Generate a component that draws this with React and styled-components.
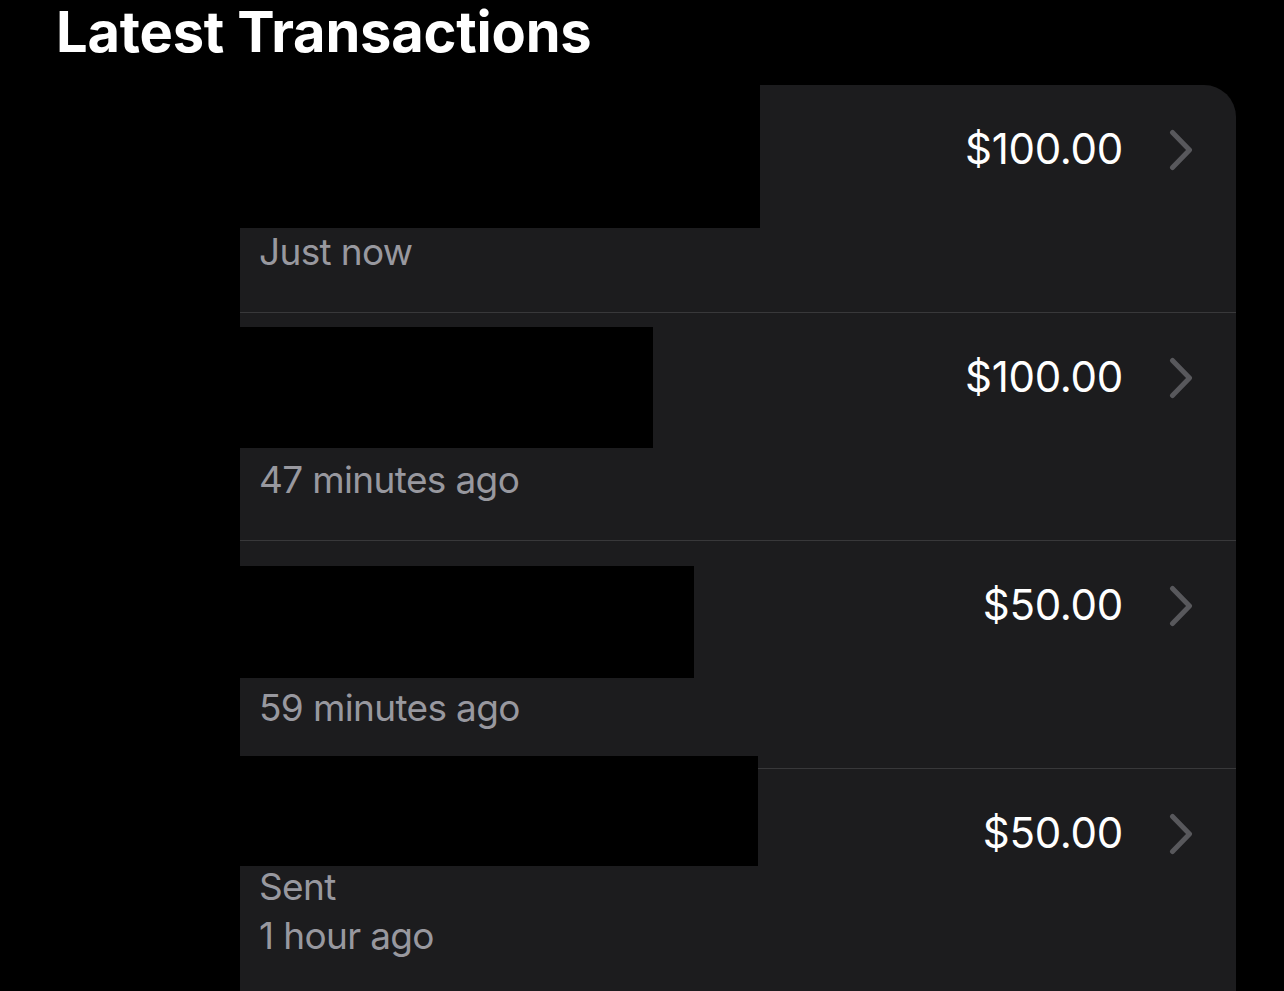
import React from "react";
import { createGlobalStyle, styled } from "styled-components";

const GlobalStyle = createGlobalStyle`
  html, body {
    margin: 0;
    padding: 0;
    background: #000;
    overflow: hidden;
  }
  body {
    font-family: Inter, "Noto Sans", "Liberation Sans", sans-serif;
    color: #fff;
    -webkit-font-smoothing: antialiased;
  }
`;

const Page = styled.main`
  width: 1284px;
  height: 991px;
  background: #000;
`;

const Title = styled.h1`
  margin: 4px 0 0 56px;
  font-size: 56px;
  line-height: 56px;
  font-weight: 700;
  letter-spacing: -0.2px;
`;

const Card = styled.section`
  margin: 25px 0 0 240px;
  width: 996px;
  background: #1c1c1e;
  border-radius: 32px 32px 0 0;
`;

const Row = styled.div`
  position: relative;
  display: grid;
  grid-template-columns: 1fr auto auto;
  align-items: start;
  height: 227px;
  border-bottom: ${(p) => (p.$last ? "none" : "1px solid #38383a")};
`;

const Info = styled.div`
  display: flex;
  flex-direction: column;
  padding: 93px 0 0 19px;
`;

const Detail = styled.span`
  display: block;
  height: 49px;
  font-size: 37px;
  line-height: 49px;
  letter-spacing: -0.65px;
  color: #98989f;
  white-space: nowrap;
`;

const Amount = styled.span`
  margin-top: 39px;
  font-size: 42px;
  line-height: 50px;
  color: #fff;
  letter-spacing: -0.3px;
`;

const Chevron = styled.svg`
  margin: 44px 43px 0 46px;
  display: block;
`;

/* black boxes laid over the names in the screenshot */
const Redaction = styled.div`
  position: absolute;
  left: 0;
  top: ${(p) => p.$top}px;
  width: ${(p) => p.$w}px;
  height: ${(p) => p.$h}px;
  background: #000;
  z-index: 2;
`;

const transactions = [
  { amount: "$100.00", details: ["", "Just now"], cover: { top: 0, w: 520, h: 143 } },
  { amount: "$100.00", details: ["", "47 minutes ago"], cover: { top: 14, w: 413, h: 121 } },
  { amount: "$50.00", details: ["", "59 minutes ago"], cover: { top: 25, w: 454, h: 112 } },
  { amount: "$50.00", details: ["Sent", "1 hour ago"], cover: { top: -13, w: 518, h: 110 } },
];

const ChevronIcon = () => (
  <Chevron width="24" height="42" viewBox="0 0 24 42">
    <path
      d="M3.5 3.5 L20.5 21 L3.5 38.5"
      fill="none"
      stroke="#58585c"
      strokeWidth="5"
      strokeLinecap="round"
      strokeLinejoin="round"
    />
  </Chevron>
);

const App = () => {
  return (
    <Page>
      <GlobalStyle />
      <Title>Latest Transactions</Title>
      <Card>
        {transactions.map((t, i) => (
          <Row key={i} $last={i === transactions.length - 1}>
            <Info>
              {t.details.map((d, j) => (
                <Detail key={j}>{d}</Detail>
              ))}
            </Info>
            <Amount>{t.amount}</Amount>
            <ChevronIcon />
            <Redaction $top={t.cover.top} $w={t.cover.w} $h={t.cover.h} />
          </Row>
        ))}
      </Card>
    </Page>
  );
};

export default App;
